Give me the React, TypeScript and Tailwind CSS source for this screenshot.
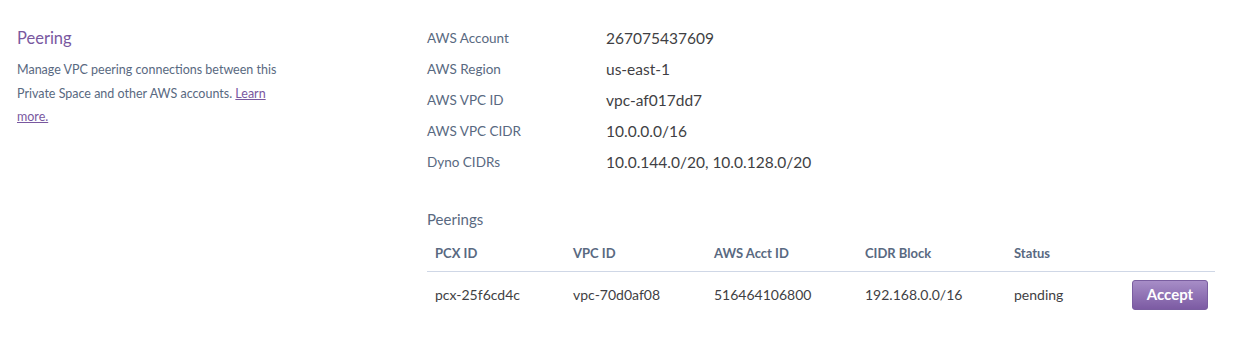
const info = [
  ["AWS Account", "267075437609"],
  ["AWS Region", "us-east-1"],
  ["AWS VPC ID", "vpc-af017dd7"],
  ["AWS VPC CIDR", "10.0.0.0/16"],
  ["Dyno CIDRs", "10.0.144.0/20, 10.0.128.0/20"],
];

const peerings = [
  { pcx: "pcx-25f6cd4c", vpc: "vpc-70d0af08", acct: "516464106800", cidr: "192.168.0.0/16", status: "pending" },
];

export default function App() {
  return (
    <div className="flex bg-white px-[17px] pt-[23px] font-['Lato',sans-serif] text-[#596981]">
      <div className="w-[410px] shrink-0">
        <h2 className="mt-[4px] text-[16.5px] leading-[22px] text-[#79589f]">Peering</h2>
        <p className="mt-[9px] w-[265px] text-[12.5px] leading-[23.5px]">
          Manage VPC peering connections between this Private Space and other AWS accounts.{" "}
          <a href="#" className="text-[#79589f] underline">
            Learn more.
          </a>
        </p>
      </div>
      <div className="flex-1 pr-[24px]">
        <dl className="flex flex-col">
          {info.map(([k, v]) => (
            <div key={k} className="flex h-[31px] items-center">
              <dt className="w-[179px] text-[13.5px]">{k}</dt>
              <dd className="text-[15.5px] text-[#3f3f44]">{v}</dd>
            </div>
          ))}
        </dl>
        <h3 className="mt-[31px] text-[15px] leading-[20px]">Peerings</h3>
        <table className="mt-[9px] w-full border-collapse text-left">
          <thead>
            <tr className="border-b border-[#cfd7e6]">
              <th className="w-[138px] px-[8px] pb-[7px] pt-[6px] text-[13px] font-bold">PCX ID</th>
              <th className="w-[141px] px-[8px] pb-[7px] pt-[6px] text-[13px] font-bold">VPC ID</th>
              <th className="w-[151px] px-[8px] pb-[7px] pt-[6px] text-[13px] font-bold">AWS Acct ID</th>
              <th className="w-[149px] px-[8px] pb-[7px] pt-[6px] text-[13px] font-bold">CIDR Block</th>
              <th className="px-[8px] pb-[7px] pt-[6px] text-[13px] font-bold">Status</th>
              <th className="px-[8px]"></th>
            </tr>
          </thead>
          <tbody>
            {peerings.map((p) => (
              <tr key={p.pcx} className="text-[14px] text-[#3f3f44]">
                <td className="px-[8px] py-[8px]">{p.pcx}</td>
                <td className="px-[8px] py-[8px]">{p.vpc}</td>
                <td className="px-[8px] py-[8px]">{p.acct}</td>
                <td className="px-[8px] py-[8px]">{p.cidr}</td>
                <td className="px-[8px] py-[8px]">{p.status}</td>
                <td className="py-[8px] pr-[7px] text-right">
                  <button className="h-[30px] w-[76px] rounded-[3px] border border-[#7a5ea0] bg-gradient-to-b from-[#a78dc7] to-[#7c5ba3] text-[15px] font-bold text-white">
                    Accept
                  </button>
                </td>
              </tr>
            ))}
          </tbody>
        </table>
      </div>
    </div>
  );
}
